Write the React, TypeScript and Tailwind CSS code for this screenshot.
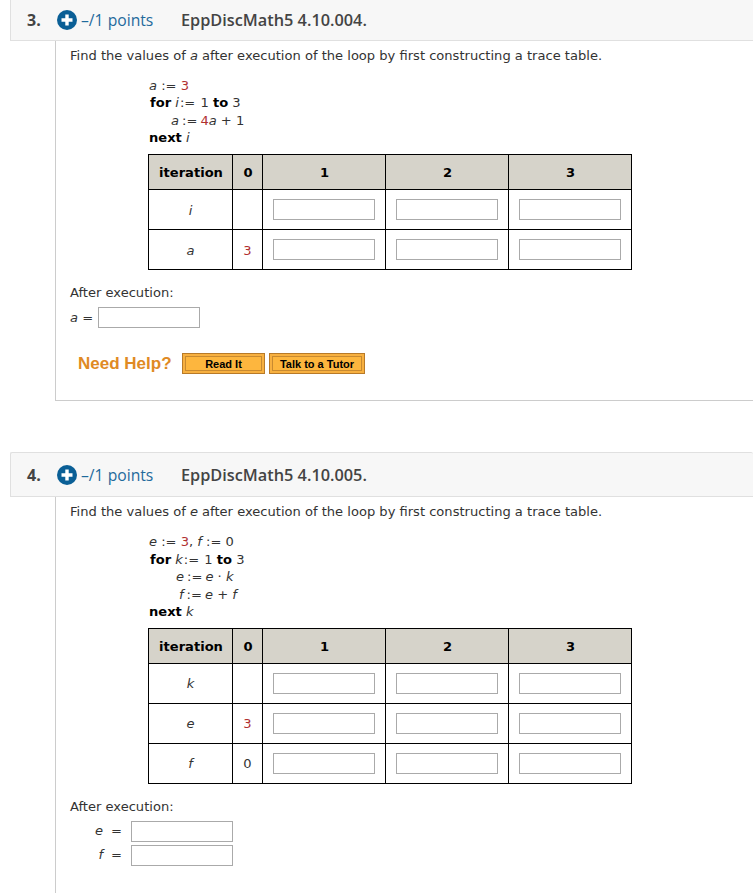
import React from "react";

const I = ({ children }: { children: React.ReactNode }) => <i className="italic">{children}</i>;
const R = ({ children }: { children: React.ReactNode }) => <span className="text-[#b03030]">{children}</span>;
const B = ({ children }: { children: React.ReactNode }) => <b className="font-bold text-black">{children}</b>;
const Eq = () => <span className="mx-[1px]">:=</span>;
const WideEq = () => <span className="mx-[3px]">:=</span>;

const Box = () => <div className="w-[102px] h-[21px] border border-[#aaaaaa] bg-white shrink-0" />;

const Header = ({ num, code, cls }: { num: string; code: string; cls: string }) => (
  <div className={`ml-[10px] flex items-center bg-[#f7f7f7] border border-[#e0e0e0] border-r-0 font-['Open_Sans',sans-serif] ${cls}`}>
    <span className="ml-[16px] w-[30px] text-[16px] font-bold text-[#444444]">{num}</span>
    <svg width="20" height="20" viewBox="0 0 20 20" className="shrink-0">
      <circle cx="10" cy="10" r="10" fill="#0a5f96" />
      <path d="M10 4.5v11M4.5 10h11" stroke="#fff" strokeWidth="3.4" />
    </svg>
    <span className="ml-[4px] w-[100px] text-[15.7px] text-[#1f6a9c]">–/1 points</span>
    <span className="text-[16.3px] font-semibold text-[#444444]">{code}</span>
  </div>
);

const Table = ({ rows, cls }: { rows: { name: string; v: string; red?: boolean }[]; cls: string }) => (
  <table className={`ml-[78px] w-[484px] border-collapse table-fixed border border-black text-center ${cls}`}>
    <colgroup>
      <col className="w-[84px]" />
      <col className="w-[30px]" />
      <col className="w-[123px]" />
      <col className="w-[123px]" />
      <col className="w-[123px]" />
    </colgroup>
    <thead>
      <tr className="h-[35px] bg-[#d6d3ca] font-bold text-black">
        {["iteration", "0", "1", "2", "3"].map((h) => (
          <th key={h} className="border border-black font-bold p-0 pt-[2px] pl-[1px]">{h}</th>
        ))}
      </tr>
    </thead>
    <tbody>
      {rows.map((r) => (
        <tr key={r.name} className="h-[40px]">
          <td className="border border-black p-0 pt-[2px] italic">{r.name}</td>
          <td className={`border border-black p-0 pt-[2px] ${r.red ? "text-[#b03030]" : ""}`}>{r.v}</td>
          {[1, 2, 3].map((c) => (
            <td key={c} className="border border-black p-0">
              <div className="flex justify-center"><Box /></div>
            </td>
          ))}
        </tr>
      ))}
    </tbody>
  </table>
);

export default function App() {
  return (
    <div className="w-[753px] h-[893px] overflow-hidden bg-white font-['DejaVu_Sans',sans-serif] text-[13.07px] leading-[18px] text-[#333333]">
      <Header num="3." code="EppDiscMath5 4.10.004." cls="h-[41px] border-t-0" />
      <div className="ml-[55px] h-[360px] border-l border-b border-[#cccccc] pl-[14px] pt-[6px]">
        <p>Find the values of <I>a</I> after execution of the loop by first constructing a trace table.</p>
        <div className="ml-[79px] mt-[12px] leading-[17.3px]">
          <div><I>a</I> := <R>3</R></div>
          <div className="ml-[1px]"><B>for</B> <I>i</I><Eq /> 1 <B>to</B> 3</div>
          <div className="ml-[22px]"><I>a</I><WideEq /><R>4</R><I>a</I> + 1</div>
          <div><B>next</B> <I>i</I></div>
        </div>
        <Table cls="mt-[8px]" rows={[{ name: "i", v: "" }, { name: "a", v: "3", red: true }]} />
        <p className="mt-[14px]">After execution:</p>
        <div className="mt-[5px] flex items-center h-[21px]">
          <span className="w-[28px]"><I>a</I> =</span>
          <Box />
        </div>
        <div className="ml-[8px] mt-[25px] flex items-center font-['Liberation_Sans',sans-serif]">
          <span className="w-[104px] text-[17px] font-bold text-[#e08a24]">Need Help?</span>
          <Btn w="w-[83px]" label="Read It" />
          <Btn w="w-[96px] ml-[4px]" label="Talk to a Tutor" />
        </div>
      </div>
      <div className="h-[51px]" />
      <Header num="4." code="EppDiscMath5 4.10.005." cls="h-[45px] rounded-t-[2px]" />
      <div className="ml-[55px] h-[397px] border-l border-[#cccccc] pl-[14px] pt-[6px]">
        <p>Find the values of <I>e</I> after execution of the loop by first constructing a trace table.</p>
        <div className="ml-[79px] mt-[12px] leading-[17.5px]">
          <div><I>e</I> := <R>3</R>, <I>f</I> := 0</div>
          <div className="ml-[1px]"><B>for</B> <I>k</I><Eq /> 1 <B>to</B> 3</div>
          <div className="ml-[27px]"><I>e</I><WideEq /><I>e</I> · <I>k</I></div>
          <div className="ml-[30px]"><I>f</I><WideEq /><I>e</I> + <I>f</I></div>
          <div><B>next</B> <I>k</I></div>
        </div>
        <Table cls="mt-[7px]" rows={[{ name: "k", v: "" }, { name: "e", v: "3", red: true }, { name: "f", v: "0" }]} />
        <p className="mt-[14px]">After execution:</p>
        <div className="mt-[5px] flex flex-col gap-[3px]">
          <div className="flex items-center h-[21px]">
            <span className="w-[61px] text-right pr-[9px]"><I>e</I><span className="ml-[8px]">=</span></span>
            <Box />
          </div>
          <div className="flex items-center h-[21px]">
            <span className="w-[61px] text-right pr-[9px]"><I>f</I><span className="ml-[8px]">=</span></span>
            <Box />
          </div>
        </div>
      </div>
    </div>
  );
}

function Btn({ w, label }: { w: string; label: string }) {
  return (
    <div className={`${w} h-[21px] border border-[#b87a28] bg-[#f7b040] p-[2px]`}>
      <div className="h-full border border-[#c88a30] bg-[#fdb63e] flex items-center justify-center text-[11px] font-bold text-black">
        {label}
      </div>
    </div>
  );
}
